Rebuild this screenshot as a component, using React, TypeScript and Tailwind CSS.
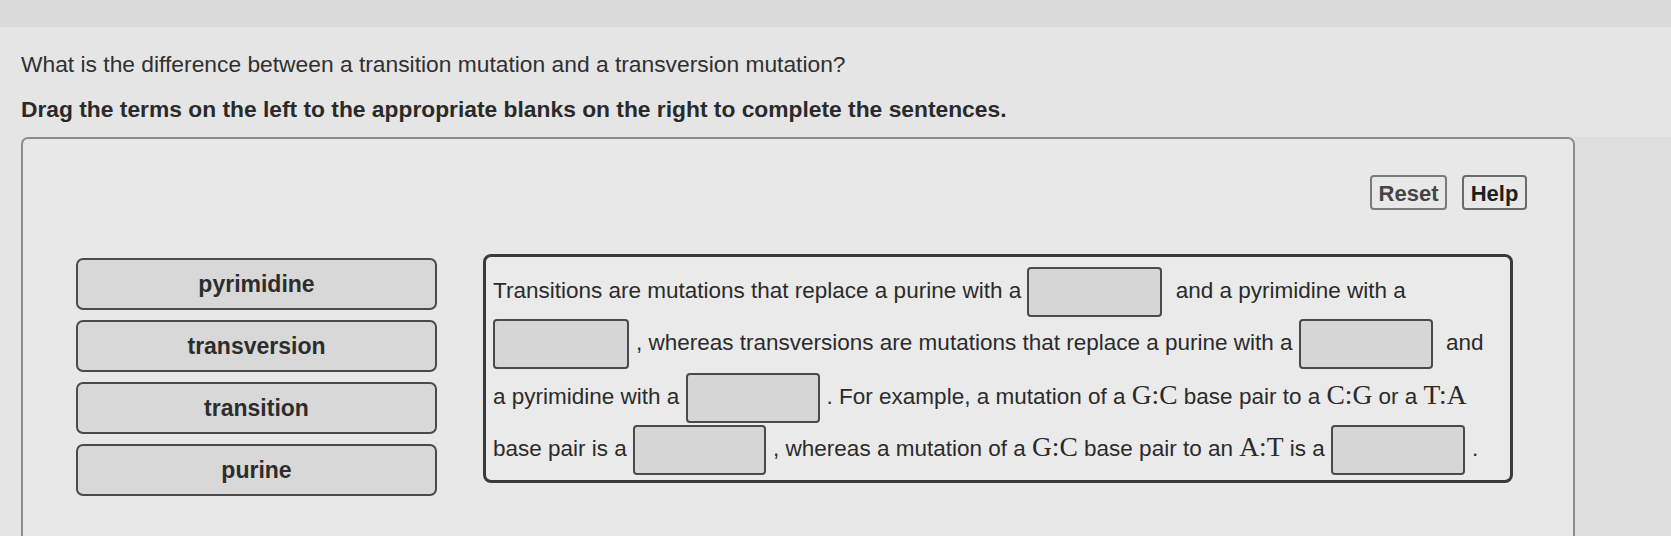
import React from "react";

const Blank = ({ w = 134 }: { w?: number }) => (
  <span
    className="inline-block align-middle h-[50px] ml-0 mr-[7px] rounded-[4px] border-2 border-[#4a4a4a] bg-[#d6d6d6]"
    style={{ width: w }}
  />
);

const M = ({ children }: { children: React.ReactNode }) => (
  <span className="font-['Liberation_Serif','Times_New_Roman',serif] text-[27.5px]">{children}</span>
);

const Term = ({ label }: { label: string }) => (
  <div className="h-[52px] w-[361px] flex items-center justify-center rounded-[7px] border-[2.5px] border-[#4a4a4a] bg-[#d8d8d8] text-[23px] font-bold text-[#2d2d2d]">
    {label}
  </div>
);

export default function App() {
  return (
    <div className="w-[1671px] h-[536px] overflow-hidden bg-[#e5e5e5] text-[#2e2e2e] font-['Liberation_Sans',Arial,sans-serif] flex flex-col">
      <div className="h-[27px] shrink-0 bg-[#dadada]" />
      <div className="pl-[21px] pt-[23px] text-[22.8px] leading-[28px] text-[#303030]">
        What is the difference between a transition mutation and a transversion mutation?
      </div>
      <div className="pl-[21px] mt-[17px] text-[22.8px] leading-[28px] font-bold text-[#2a2a2a]">
        Drag the terms on the left to the appropriate blanks on the right to complete the sentences.
      </div>
      <div className="flex flex-1 mt-[14px]">
        <div className="ml-[21px] w-[1554px] shrink-0 rounded-t-[7px] border-2 border-b-0 border-[#8c8c8c] bg-[#e8e8e8] flex flex-col">
          <div className="flex justify-end gap-[15px] pt-[36px] pr-[46px]">
            <button className="h-[35px] w-[77px] rounded-[4px] border-2 border-[#7a7a7a] bg-[#e8e8e8] text-[22px] font-bold text-[#454545]">
              Reset
            </button>
            <button className="h-[35px] w-[65px] rounded-[4px] border-2 border-[#6a6a6a] bg-[#e8e8e8] text-[22px] font-bold text-[#1f1f1f]">
              Help
            </button>
          </div>
          <div className="flex items-start gap-[46px] pl-[53px] mt-[44px]">
            <div className="flex flex-col gap-[10px] mt-[4px]">
              <Term label="pyrimidine" />
              <Term label="transversion" />
              <Term label="transition" />
              <Term label="purine" />
            </div>
            <div className="w-[1030px] rounded-[8px] border-[3px] border-[#3a3a3a] bg-[#eaeaea] pl-[7px] pt-[8px] pb-[7px] text-[22.5px] text-[#2b2b2b]">
              <div className="h-[52px] leading-[52px] whitespace-nowrap">
                Transitions are mutations that replace a purine with a <Blank w={135} /> and a pyrimidine with a
              </div>
              <div className="h-[52px] leading-[52px] whitespace-nowrap">
                <Blank w={136} />, whereas transversions are mutations that replace a purine with a <Blank /> and
              </div>
              <div className="h-[52px] leading-[52px] whitespace-nowrap">
                a pyrimidine with a <Blank />. For example, a mutation of a <M>G:C</M> base pair to a <M>C:G</M> or a <M>T:A</M>
              </div>
              <div className="h-[52px] leading-[52px] whitespace-nowrap">
                base pair is a <Blank w={133} />, whereas a mutation of a <M>G:C</M> base pair to an <M>A:T</M> is a <Blank />.
              </div>
            </div>
          </div>
        </div>
        <div className="flex-1 bg-[#dedede]" />
      </div>
    </div>
  );
}
